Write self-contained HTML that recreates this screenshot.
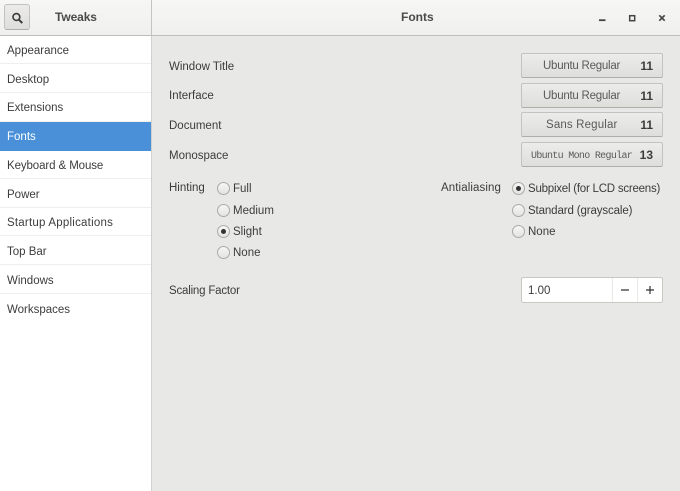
<!DOCTYPE html>
<html><head><meta charset="utf-8">
<style>
html,body{margin:0;padding:0;width:680px;height:491px;overflow:hidden;background:#e8e8e7}
body{position:relative;font-family:"Liberation Sans",sans-serif;font-size:11.5px;color:#3c3c3c}
.a{position:absolute;white-space:nowrap}
#hdr{left:0;top:0;width:680px;height:35px;background:linear-gradient(#f6f6f5,#f0f0ef);border-bottom:1px solid #bdbdb9}
#sep{left:151px;top:0;width:1px;height:35px;background:#c4c4c0}
#side{left:0;top:36px;width:151px;height:455px;background:#fff}
#sb{left:151px;top:36px;width:1px;height:455px;background:#d0d0cd}
.row{position:absolute;left:0;width:151px;height:28px;line-height:30px;padding-left:7px;box-sizing:border-box;border-bottom:1px solid #eeeeed;color:#3c3c3c;overflow:hidden}
.btn{position:absolute;left:521px;width:142px;height:25px;box-sizing:border-box;border:1px solid #c2c2be;border-bottom-color:#aeaeaa;border-radius:2px;background:linear-gradient(#ececea,#dededb);color:#5a5a5a}
.btn span{position:absolute;top:0;line-height:25px;white-space:nowrap}
.btn b{position:absolute;right:9px;top:0;line-height:25px;color:#3c3c3c;font-size:12px}
.r{position:absolute;width:13px;height:13px;box-sizing:border-box;border:1px solid #aaaaa6;border-radius:50%;background:linear-gradient(#f6f6f5,#e4e4e2)}
.r.on:after{content:"";position:absolute;left:3px;top:3px;width:5px;height:5px;border-radius:50%;background:#333}
</style></head><body>
<div class="a" id="hdr"></div><div class="a" id="sep"></div>
<div class="a" style="left:4px;top:4px;width:26px;height:26px;box-sizing:border-box;border:1px solid #c2c2be;border-bottom-color:#aeaeaa;border-radius:3px;background:linear-gradient(#ecebe9,#dededb)"></div>
<svg class="a" style="left:11px;top:12px" width="13" height="13" viewBox="0 0 13 13"><circle cx="5.400" cy="5" r="3.400" fill="none" stroke="#3c3c3c" stroke-width="1.600"/><path d="M8 7.800l3.300 3.300" stroke="#3c3c3c" stroke-width="2"/></svg>
<div class="a" style="left:55px;top:9px;line-height:16px;font-weight:bold;color:#4a4a4a;font-size:12px;letter-spacing:-.1px">Tweaks</div>
<div class="a" style="left:401px;top:9px;line-height:16px;font-weight:bold;color:#4a4a4a;font-size:12px">Fonts</div>
<svg class="a" style="left:595px;top:12px" width="75" height="12" viewBox="0 0 75 12"><path d="M4 8.200h6.500" stroke="#444" stroke-width="1.800"/><rect x="34.700" y="3.700" width="5" height="5" fill="none" stroke="#444" stroke-width="1.500"/><path d="M64.300 3.300l5.400 5.400M69.700 3.300l-5.400 5.400" stroke="#444" stroke-width="1.700"/></svg>
<div class="a" id="side"></div><div class="a" id="sb"></div>
<div class="row" style="top:36px">Appearance</div>
<div class="row" style="top:65px">Desktop</div>
<div class="row" style="top:94px;line-height:28px">Extensions</div>
<div class="row" style="top:122px;height:29px;line-height:30px;background:#4a90d9;color:#fff;border:0">Fonts</div>
<div class="row" style="top:151px;letter-spacing:-.1px">Keyboard &amp; Mouse</div>
<div class="row" style="top:180px">Power</div>
<div class="row" style="top:208px;letter-spacing:.22px">Startup Applications</div>
<div class="row" style="top:237px">Top Bar</div>
<div class="row" style="top:266px">Windows</div>
<div class="row" style="top:295px;border:0">Workspaces</div>
<div class="a" style="left:169px;top:61px">Window Title</div>
<div class="a" style="left:169px;top:90px">Interface</div>
<div class="a" style="left:169px;top:120px">Document</div>
<div class="a" style="left:169px;top:150px">Monospace</div>
<div class="btn" style="top:53px"><span style="left:21px;letter-spacing:-.25px">Ubuntu Regular</span><b>11</b></div>
<div class="btn" style="top:83px"><span style="left:21px;letter-spacing:-.25px">Ubuntu Regular</span><b>11</b></div>
<div class="btn" style="top:112px"><span style="left:24px;letter-spacing:.15px">Sans Regular</span><b>11</b></div>
<div class="btn" style="top:142px"><span style="left:9px;line-height:27px;font-family:'Liberation Mono',monospace;font-size:10px;letter-spacing:-.68px">Ubuntu Mono Regular</span><b>13</b></div>
<div class="a" style="left:169px;top:182px">Hinting</div>
<div class="r" style="left:217px;top:182px"></div><div class="a" style="left:233px;top:183px">Full</div>
<div class="r" style="left:217px;top:204px"></div><div class="a" style="left:233px;top:205px">Medium</div>
<div class="r on" style="left:217px;top:225px"></div><div class="a" style="left:233px;top:226px">Slight</div>
<div class="r" style="left:217px;top:246px"></div><div class="a" style="left:233px;top:247px">None</div>
<div class="a" style="left:441px;top:182px;letter-spacing:.1px">Antialiasing</div>
<div class="r on" style="left:512px;top:182px"></div><div class="a" style="left:528px;top:183px;letter-spacing:-.23px">Subpixel (for LCD screens)</div>
<div class="r" style="left:512px;top:204px"></div><div class="a" style="left:528px;top:205px;letter-spacing:-.12px">Standard (grayscale)</div>
<div class="r" style="left:512px;top:225px"></div><div class="a" style="left:528px;top:226px">None</div>
<div class="a" style="left:169px;top:285px;letter-spacing:-.2px">Scaling Factor</div>
<div class="a" style="left:521px;top:277px;width:142px;height:26px;box-sizing:border-box;background:#fff;border:1px solid #c8c8c4;border-radius:2px"></div>
<div class="a" style="left:528px;top:285px">1.00</div>
<div class="a" style="left:612px;top:278px;width:1px;height:24px;background:#e8e8e6"></div>
<div class="a" style="left:637px;top:278px;width:1px;height:24px;background:#e8e8e6"></div>
<svg class="a" style="left:618px;top:284px" width="40" height="12" viewBox="0 0 40 12"><path d="M3 6h8M28 6h8M32 2v8" stroke="#333" stroke-width="1.200"/></svg>
</body></html>
